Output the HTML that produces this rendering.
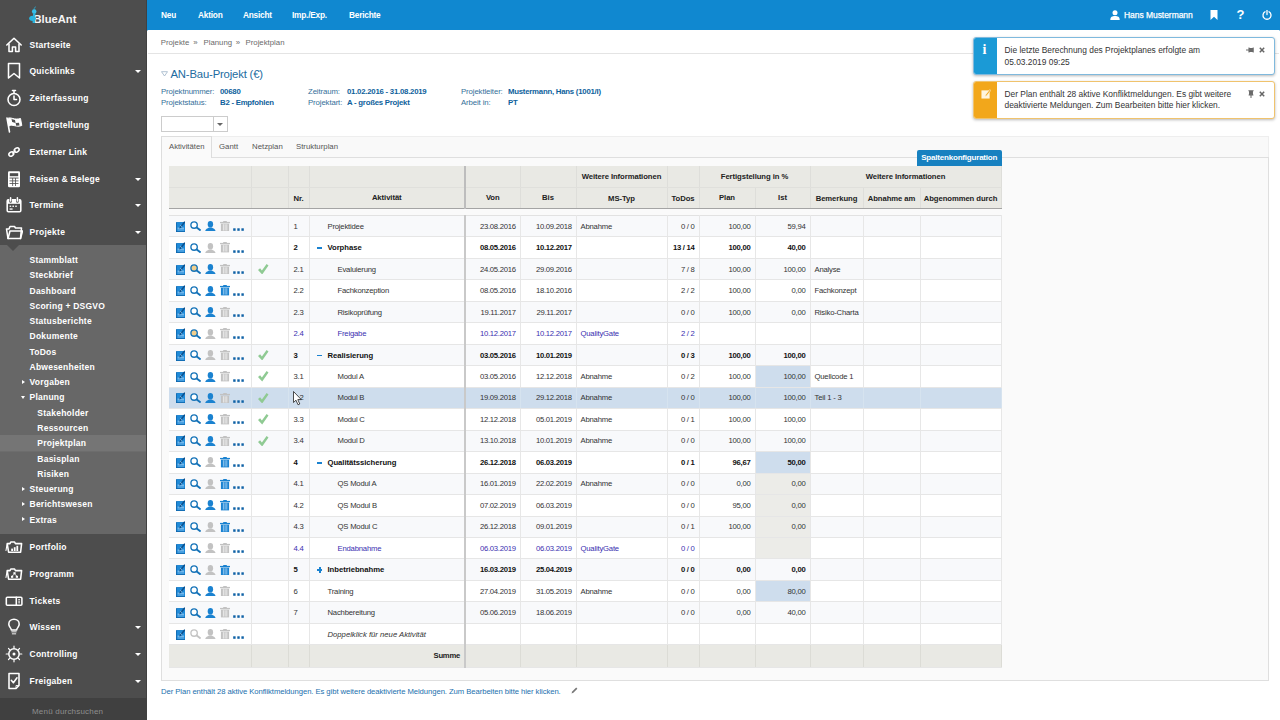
<!DOCTYPE html>
<html lang="de"><head><meta charset="utf-8"><title>Blue Ant - Projektplan</title>
<style>
*{box-sizing:border-box;margin:0;padding:0}
html,body{width:1280px;height:720px;overflow:hidden;background:#fff}
body{font-family:"Liberation Sans","DejaVu Sans",sans-serif;font-size:8px;color:#333;position:relative}
#sb{position:absolute;left:0;top:0;width:147px;height:720px;background:#4d4d4d;color:#fff;overflow:hidden;box-shadow:inset -1px 0 0 #414141}
#logo{position:absolute;left:33.5px;top:9px;font-size:11.2px;font-weight:bold;color:#f4f4f4;letter-spacing:0;line-height:20px;white-space:nowrap}
.mi{position:absolute;left:0;width:148px;height:26px;line-height:26px}
.sbi{position:absolute;left:5px;top:4px}
.mt{position:absolute;left:29.5px;top:0;font-size:8.5px;font-weight:bold;letter-spacing:.26px;color:#fff;white-space:nowrap}
.car{position:absolute;left:135px;top:12px;border:3px solid transparent;border-top:3.5px solid #fff;border-bottom:0}
.subbg{position:absolute;left:0;top:245px;width:146px;height:289px;background:#676767}
.notch{position:absolute;left:6.7px;top:245px;border:6px solid transparent;border-top:6px solid #4d4d4d;border-bottom:0}
.si{position:absolute;left:0;width:148px;height:15px;line-height:15px;font-size:8.5px;font-weight:bold;letter-spacing:.24px;color:#fff;white-space:nowrap}
.si.act{background:#757575;box-shadow:0 -1px 0 #757575,0 .5px 0 #757575;width:146px}
.tr{position:absolute;left:21.8px;top:4.8px;border:2.7px solid transparent;border-left:3.3px solid #fff;border-right:0}
.td2{position:absolute;left:20.6px;top:6px;border:2.8px solid transparent;border-top:3.4px solid #fff;border-bottom:0}
#srch{position:absolute;left:0;top:698px;width:148px;height:22px;background:#404040;color:#8e8e8e;font-size:8px;line-height:27px;padding-left:32px;letter-spacing:.2px}
#tb{position:absolute;left:147px;top:0;width:1133px;height:30px;background:#1088d0;color:#fff;box-shadow:0 1px 0 #9fcfec}
#tb>*{margin-left:1px}
#tb span{position:absolute;top:0;line-height:30px;font-size:8.3px;font-weight:bold;white-space:nowrap;letter-spacing:-.22px}
#bc{position:absolute;left:149px;top:30px;width:1131px;height:24px;border-bottom:1px solid #e4e4e4;margin-left:-1px;padding-left:0;background:#fff;color:#6a6a6a;font-size:7.8px;line-height:26px}
#bc span{position:absolute;top:0;white-space:nowrap}
#ttl{position:absolute;left:170.5px;top:65px;font-size:11.3px;letter-spacing:-.17px;line-height:18px;color:#226c9f;white-space:nowrap}
.inf{position:absolute;font-size:7.8px;line-height:10px;color:#356f99;white-space:nowrap;margin-top:.5px;letter-spacing:-.12px}
.inf b{letter-spacing:-.24px}
.inf b{color:#0e5f9c}
#dd{position:absolute;left:161px;top:116px;width:67px;height:16px;border:1px solid #ccc;background:#fff}
#dd i{position:absolute;left:51px;top:0;width:1px;height:14px;background:#ccc}
#dd b{position:absolute;left:54.5px;top:6px;border:3px solid transparent;border-top:3px solid #666;border-bottom:0}
#tabs{position:absolute;left:161px;top:136px;width:1108px;height:22px;background:#f9f9f9;border-top:1px solid #eee;border-right:1px solid #eee}
#tabs span{position:absolute;top:0;line-height:20px;font-size:7.8px;color:#555;white-space:nowrap}
#tab1{position:absolute;left:161px;top:136px;width:51px;height:22px;background:#fafafa;border:1px solid #ddd;border-bottom:0}
#panel{position:absolute;left:161px;top:157px;width:1108px;height:524px;background:#fafafa;border:1px solid #dfdfdf}
#tab1{z-index:2;font-size:7.7px;color:#555;line-height:20px;padding-left:7px}
#spk{position:absolute;left:917px;top:150px;width:84.5px;height:15.5px;background:#1781c0;color:#fff;font-weight:bold;font-size:8px;letter-spacing:-.2px;line-height:15px;text-align:center;border-radius:2px 2px 0 0;white-space:nowrap;z-index:3}
table{position:absolute;left:169px;top:166px;border-collapse:collapse;table-layout:fixed;width:832px;z-index:3}
th{background:#e9e9e4;font-size:7.7px;letter-spacing:-.07px;font-weight:bold;color:#222;height:21.4px;border-right:1px solid #dededa;border-bottom:1px solid #e0e0dc;text-align:center;white-space:nowrap;overflow:hidden;padding:0}
tr.h2 th{border-bottom:1px solid #a4a4a4;height:21.6px;padding-bottom:.6px}
tr.h2 th.lo{padding-bottom:0;padding-top:1.5px}
tr.gap td{height:6.5px;border:0;background:#fafafa}
td{height:21.47px;font-size:7.7px;letter-spacing:-.2px;color:#333;border-right:1px solid #e7e7e7;border-bottom:1px solid #e6e6e6;white-space:nowrap;overflow:hidden;padding:0 4px;background:#fff;vertical-align:middle}
tbody tr:nth-child(2) td{border-top:1px solid #e2e2e2}
tr.alt td{background:#f8f9fb}
tr.b td{font-weight:bold;color:#111}
tr.l td{color:#3a2fb0}
tr.sel td{background:#cedded;border-right-color:#d6e3ef}
tr.sum td{height:22.2px;background:#e9e9e4;border-right:1px solid #dcdcd6}
td.r{text-align:right;letter-spacing:-.27px}
tr.b td.name{letter-spacing:-.04px}
tr.new td.name{letter-spacing:0}
td.d{padding-right:3.8px}
td.td{padding-right:4px}
td.act{padding:0 0 0 6.7px}
td.c{text-align:left;padding:0 0 0 6.5px}
td.c svg{vertical-align:middle}
td.nr{padding-left:5px}
td.ib{background:#cedded !important}
td.ig{background:#ecece8 !important}
td.sm{font-weight:bold;color:#222}
.thick{border-left:2px solid #c9c9c9}
th.thick{border-left:2px solid #bdbdbd}
.ic{vertical-align:middle}
.tg{display:inline-block;width:10px;margin-left:-10px;height:6px;position:relative;vertical-align:middle}
.tg i{position:absolute;left:-.5px;top:2.2px;width:5.4px;height:1.5px;background:#1a82d0}
.tg b{position:absolute;left:1.5px;top:.2px;width:1.5px;height:5.4px;background:#1a82d0}
#foot{position:absolute;left:161px;top:687px;font-size:7.7px;letter-spacing:-.07px;color:#1a70ae;white-space:nowrap;line-height:10px}
.nt{position:absolute;left:973px;width:302px;height:37.5px;background:#fff;border-radius:3px;box-shadow:0 1px 3px rgba(0,0,0,.28);overflow:hidden;z-index:5}
.nt .bar{position:absolute;left:0;top:0;width:23px;height:38px}
.nt p{position:absolute;left:30.5px;top:7px;font-size:8.4px;line-height:11.4px;color:#333;white-space:nowrap}
.nt .x{position:absolute;top:8.5px;font-size:7px;color:#666;font-weight:bold;line-height:8px}
</style></head><body>
<div id="sb">
<div id="logo"><svg width="9" height="18" viewBox="0 0 9 18" style="position:absolute;left:-4.5px;top:-3px"><path d="M5 4 C5 2 6 1 7 .6" stroke="#2bb5e0" stroke-width=".7" fill="none"/><circle cx="5.2" cy="5.6" r="2.3" fill="#37c0ea"/><rect x="4" y="7.5" width="2.4" height="3" fill="#2bb5e0"/><ellipse cx="3.6" cy="12.3" rx="3.4" ry="2.6" fill="#2bb5e0"/><rect x="3.6" y="14" width="2.6" height="3" fill="#2bb5e0"/></svg>BlueAnt</div>
<div class="mi" style="top:31.6px"><svg class="sbi" width="18" height="18" viewBox="0 0 18 18"><path d="M1.8 9 L9 2.2 L16.2 9" stroke="#fff" fill="none" stroke-width="1.55" stroke-linejoin="round" stroke-linecap="round"/><path d="M4 8 V15.5 H7.4 V11 H10.6 V15.5 H14 V8" stroke="#fff" fill="none" stroke-width="1.55" stroke-linejoin="round" stroke-linecap="round"/></svg><span class="mt">Startseite</span></div><div class="mi" style="top:58.4px"><svg class="sbi" width="18" height="18" viewBox="0 0 18 18"><path d="M3.5 1.5 H14.5 V16 L9 11.5 L3.5 16 Z" stroke="#fff" fill="none" stroke-width="1.55" stroke-linejoin="round" stroke-linecap="round"/></svg><span class="mt">Quicklinks</span><span class="car"></span></div><div class="mi" style="top:85.2px"><svg class="sbi" width="18" height="18" viewBox="0 0 18 18"><circle cx="9" cy="10.5" r="6" stroke="#fff" fill="none" stroke-width="1.55" stroke-linejoin="round" stroke-linecap="round"/><path d="M9 7 V10.5 H11.5" stroke="#fff" fill="none" stroke-width="1.55" stroke-linejoin="round" stroke-linecap="round"/><path d="M7.5 1.5 H10.5 M9 1.5 V4" stroke="#fff" fill="none" stroke-width="1.55" stroke-linejoin="round" stroke-linecap="round"/></svg><span class="mt">Zeiterfassung</span></div><div class="mi" style="top:112.0px"><svg class="sbi" width="18" height="18" viewBox="0 0 18 18"><path d="M2 2 L4.5 16" stroke="#fff" fill="none" stroke-width="1.55" stroke-linejoin="round" stroke-linecap="round"/><path d="M2.5 2.5 C6 0.5 9 4.5 15.5 2.5 L16.8 9.5 C11 11.8 7.5 7.5 4 10 Z" fill="#fff" stroke="#fff" stroke-width="1"/><path d="M6.5 3 L10 4 L10.6 7 L7.2 6 Z M10.6 7 L14 6.8 L14.5 9.6 L11.2 9.8 Z" fill="#4d4d4d"/></svg><span class="mt">Fertigstellung</span></div><div class="mi" style="top:138.8px"><svg class="sbi" width="18" height="18" viewBox="0 0 18 18"><ellipse cx="6.3" cy="11" rx="2.6" ry="1.9" transform="rotate(-35 6.3 11)" stroke="#fff" fill="none" stroke-width="1.55" stroke-linejoin="round" stroke-linecap="round"/><ellipse cx="11.7" cy="7" rx="2.6" ry="1.9" transform="rotate(-35 11.7 7)" stroke="#fff" fill="none" stroke-width="1.55" stroke-linejoin="round" stroke-linecap="round"/><path d="M7.8 10 L10.2 8" stroke="#fff" fill="none" stroke-width="1.55" stroke-linejoin="round" stroke-linecap="round"/></svg><span class="mt">Externer Link</span></div><div class="mi" style="top:165.6px"><svg class="sbi" width="18" height="18" viewBox="0 0 18 18"><rect x="3" y="1.2" width="12" height="16" rx="1.2" fill="#fff"/><rect x="4.8" y="3.2" width="8.4" height="3" fill="#4d4d4d"/><g fill="#4d4d4d"><rect x="4.5" y="7.6" width="9" height=".9"/><rect x="4.5" y="10.5" width="9" height=".8"/><rect x="4.5" y="13.2" width="9" height=".8"/><rect x="7.3" y="8" width=".8" height="8"/><rect x="10" y="8" width=".8" height="8"/></g></svg><span class="mt">Reisen &amp; Belege</span><span class="car"></span></div><div class="mi" style="top:192.4px"><svg class="sbi" width="18" height="18" viewBox="0 0 18 18"><rect x="2.2" y="3.8" width="13.6" height="12" rx="1.2" stroke="#fff" fill="none" stroke-width="1.55" stroke-linejoin="round" stroke-linecap="round"/><rect x="2.2" y="3.8" width="13.6" height="4" fill="#fff"/><path d="M5.6 1.8 V5.4 M12.4 1.8 V5.4" stroke="#4d4d4d" stroke-width="2.6" stroke-linecap="round"/><path d="M5.6 1.8 V5 M12.4 1.8 V5" stroke="#fff" fill="none" stroke-width="1.55" stroke-linejoin="round" stroke-linecap="round"/><g fill="#fff"><rect x="4.6" y="9.6" width="1.6" height="1.3"/><rect x="7.4" y="9.6" width="1.6" height="1.3"/><rect x="10.2" y="9.6" width="1.6" height="1.3"/><rect x="4.6" y="12.4" width="3" height="1.3"/></g></svg><span class="mt">Termine</span><span class="car"></span></div><div class="mi" style="top:219.2px"><svg class="sbi" width="18" height="18" viewBox="0 0 18 18"><path d="M3 15.5 L1.5 6 H4 L5 3.5 H9.5 L10.5 5 H16.5 L15.5 15.5 Z" stroke="#fff" fill="none" stroke-width="1.55" stroke-linejoin="round" stroke-linecap="round"/><path d="M3 15.5 L5 8 H17.5 L15.5 15.5" stroke="#fff" fill="none" stroke-width="1.55" stroke-linejoin="round" stroke-linecap="round"/></svg><span class="mt">Projekte</span><span class="car"></span></div><div class="subbg"></div><div class="notch"></div><div class="si" style="top:253.0px;padding-left:29.5px">Stammblatt</div><div class="si" style="top:268.3px;padding-left:29.5px">Steckbrief</div><div class="si" style="top:283.5px;padding-left:29.5px">Dashboard</div><div class="si" style="top:298.8px;padding-left:29.5px">Scoring + DSGVO</div><div class="si" style="top:314.1px;padding-left:29.5px">Statusberichte</div><div class="si" style="top:329.4px;padding-left:29.5px">Dokumente</div><div class="si" style="top:344.6px;padding-left:29.5px">ToDos</div><div class="si" style="top:359.9px;padding-left:29.5px">Abwesenheiten</div><div class="si" style="top:375.2px;padding-left:29.5px"><span class="tr"></span>Vorgaben</div><div class="si" style="top:390.4px;padding-left:29.5px"><span class="td2"></span>Planung</div><div class="si" style="top:405.7px;padding-left:37.3px">Stakeholder</div><div class="si" style="top:421.0px;padding-left:37.3px">Ressourcen</div><div class="si act" style="top:436.2px;padding-left:37.3px">Projektplan</div><div class="si" style="top:451.5px;padding-left:37.3px">Basisplan</div><div class="si" style="top:466.8px;padding-left:37.3px">Risiken</div><div class="si" style="top:482.0px;padding-left:29.5px"><span class="tr"></span>Steuerung</div><div class="si" style="top:497.3px;padding-left:29.5px"><span class="tr"></span>Berichtswesen</div><div class="si" style="top:512.6px;padding-left:29.5px"><span class="tr"></span>Extras</div><div class="mi" style="top:534.0px"><svg class="sbi" width="18" height="18" viewBox="0 0 18 18"><path d="M3.6 14.2 L2.2 5.6 H5 L5.8 4 H9.6 L10.4 5.6 H16.6 L15.6 14.2 Z" stroke="#fff" fill="none" stroke-width="1.55" stroke-linejoin="round" stroke-linecap="round"/><path d="M2 6.5 L1 12.5" stroke="#fff" stroke-width="1.1" stroke-linecap="round"/><g fill="#fff"><rect x="6.2" y="10.6" width="1.8" height="2.4"/><rect x="8.8" y="9.2" width="1.8" height="3.8"/><rect x="11.4" y="7.8" width="1.8" height="5.2"/></g></svg><span class="mt">Portfolio</span></div><div class="mi" style="top:561.0px"><svg class="sbi" width="18" height="18" viewBox="0 0 18 18"><path d="M3.6 14.2 L2.2 5.6 H5 L5.8 4 H9.6 L10.4 5.6 H16.6 L15.6 14.2 Z" stroke="#fff" fill="none" stroke-width="1.55" stroke-linejoin="round" stroke-linecap="round"/><path d="M2 6.5 L1 12.5" stroke="#fff" stroke-width="1.1" stroke-linecap="round"/><g fill="#fff"><rect x="8.4" y="7.2" width="2.2" height="2"/><rect x="6" y="10.8" width="2.2" height="2"/><rect x="10.8" y="10.8" width="2.2" height="2"/></g><path d="M9.5 9 L7.1 11 M9.5 9 L11.9 11" stroke="#fff" stroke-width=".8"/></svg><span class="mt">Programm</span></div><div class="mi" style="top:587.8px"><svg class="sbi" width="18" height="18" viewBox="0 0 18 18"><rect x="1.3" y="5.2" width="15.6" height="8" rx="1" stroke="#fff" fill="none" stroke-width="1.55" stroke-linejoin="round" stroke-linecap="round"/><path d="M11.3 5.2 V13.2" stroke="#fff" fill="none" stroke-width="1.55" stroke-linejoin="round" stroke-linecap="round"/><path d="M13.2 7.6 H15 M13.2 9.2 H15 M13.2 10.8 H15" stroke="#fff" stroke-width=".9"/></svg><span class="mt">Tickets</span></div><div class="mi" style="top:614.0px"><svg class="sbi" width="18" height="18" viewBox="0 0 18 18"><path d="M6.3 12 C6.3 10 3.8 9 3.8 6.2 C3.8 3.3 6.1 1.3 9 1.3 C11.9 1.3 14.2 3.3 14.2 6.2 C14.2 9 11.7 10 11.7 12 Z" stroke="#fff" fill="none" stroke-width="1.55" stroke-linejoin="round" stroke-linecap="round"/><rect x="6.4" y="13" width="5.2" height="1.5" fill="#bbb"/><rect x="6.9" y="15" width="4.2" height="1.5" fill="#bbb"/></svg><span class="mt">Wissen</span><span class="car"></span></div><div class="mi" style="top:641.0px"><svg class="sbi" width="18" height="18" viewBox="0 0 18 18"><circle cx="9" cy="9" r="5.2" stroke="#fff" fill="none" stroke-width="1.55" stroke-linejoin="round" stroke-linecap="round"/><circle cx="9" cy="9" r="1.5" fill="#fff"/><path d="M9 1.2 V3 M9 15 V16.8 M1.2 9 H3 M15 9 H16.8 M3.5 3.5 L4.8 4.8 M13.2 13.2 L14.5 14.5 M14.5 3.5 L13.2 4.8 M4.8 13.2 L3.5 14.5" stroke="#fff" stroke-width="1.2" stroke-linecap="round"/></svg><span class="mt">Controlling</span><span class="car"></span></div><div class="mi" style="top:668.0px"><svg class="sbi" width="18" height="18" viewBox="0 0 18 18"><path d="M4 1.5 H14 V13.5 L11 16.5 H4 Z" stroke="#fff" fill="none" stroke-width="1.55" stroke-linejoin="round" stroke-linecap="round"/><path d="M6.3 8.3 L8.4 10.8 L12 5.8" stroke="#fff" fill="none" stroke-width="1.55" stroke-linejoin="round" stroke-linecap="round"/><path d="M14 13.5 H11 V16.5" stroke="#fff" stroke-width=".9" fill="none"/></svg><span class="mt">Freigaben</span><span class="car"></span></div>
<div id="srch">Menü durchsuchen</div>
</div>
<div id="tb">
<span style="left:13px">Neu</span><span style="left:50px">Aktion</span><span style="left:95px">Ansicht</span><span style="left:144px">Imp./Exp.</span><span style="left:201px">Berichte</span>
<svg width="10" height="10" viewBox="0 0 10 10" style="position:absolute;left:962px;top:10px"><circle cx="5" cy="2.8" r="2.5" fill="#fff"/><path d="M0.3 10 C0.3 6.8 2.2 6 5 6 C7.8 6 9.7 6.8 9.7 10 Z" fill="#fff"/></svg>
<span style="left:976px;font-weight:normal;font-size:8.5px;letter-spacing:-.05px;-webkit-text-stroke:.25px #fff">Hans Mustermann</span>
<svg width="8" height="10" viewBox="0 0 8 10" style="position:absolute;left:1062px;top:10px"><path d="M0.5 0 H7.5 V10 L4 6.8 L0.5 10 Z" fill="#fff"/></svg>
<span style="left:1088.5px;font-size:13px;font-weight:bold">?</span>
<svg width="10" height="10" viewBox="0 0 10 10" style="position:absolute;left:1114px;top:10px"><path d="M3 1.8 A4 4 0 1 0 7 1.8" fill="none" stroke="#fff" stroke-width="1.3" stroke-linecap="round"/><path d="M5 0.3 V4.6" stroke="#fff" stroke-width="1.3" stroke-linecap="round"/></svg>
</div>
<div id="bc"><span style="left:12.7px">Projekte</span><span style="left:45.3px">»</span><span style="left:55.5px">Planung</span><span style="left:87.7px">»</span><span style="left:97.5px">Projektplan</span></div>
<svg width="7" height="6" viewBox="0 0 7 6" style="position:absolute;left:161px;top:71px"><path d="M0.5 0.7 H6.5 L3.5 5 Z" fill="none" stroke="#9db3c6" stroke-width=".8"/></svg>
<div id="ttl">AN-Bau-Projekt (€)</div>
<div class="inf" style="left:161px;top:86px">Projektnummer:</div><div class="inf" style="left:220px;top:86px"><b>00680</b></div>
<div class="inf" style="left:161px;top:97px">Projektstatus:</div><div class="inf" style="left:220px;top:97px"><b>B2 - Empfohlen</b></div>
<div class="inf" style="left:308px;top:86px">Zeitraum:</div><div class="inf" style="left:347px;top:86px"><b>01.02.2016 - 31.08.2019</b></div>
<div class="inf" style="left:308px;top:97px">Projektart:</div><div class="inf" style="left:347px;top:97px"><b>A - großes Projekt</b></div>
<div class="inf" style="left:461px;top:86px">Projektleiter:</div><div class="inf" style="left:508px;top:86px"><b>Mustermann, Hans (1001/I)</b></div>
<div class="inf" style="left:461px;top:97px">Arbeit in:</div><div class="inf" style="left:508px;top:97px"><b>PT</b></div>
<div id="dd"><i></i><b></b></div>
<div id="tabs"><span style="left:58px">Gantt</span><span style="left:91px">Netzplan</span><span style="left:135px">Strukturplan</span></div>
<div id="tab1">Aktivitäten</div>
<div id="panel"></div>
<div id="spk">Spaltenkonfiguration</div>
<table>
<colgroup><col style="width:82px"><col style="width:37px"><col style="width:21px"><col style="width:156px"><col style="width:55px"><col style="width:56px"><col style="width:91px"><col style="width:32px"><col style="width:56px"><col style="width:55px"><col style="width:53px"><col style="width:57px"><col style="width:81px"></colgroup>
<thead>
<tr class="h1"><th></th><th></th><th></th><th></th><th class="thick"></th><th></th><th>Weitere Informationen</th><th></th><th colspan="2">Fertigstellung in %</th><th colspan="3">Weitere Informationen</th></tr>
<tr class="h2"><th></th><th></th><th class="lo" style="text-align:left;padding-left:5px">Nr.</th><th>Aktivität</th><th class="thick">Von</th><th>Bis</th><th class="lo">MS-Typ</th><th class="lo">ToDos</th><th>Plan</th><th>Ist</th><th class="lo">Bemerkung</th><th class="lo">Abnahme am</th><th class="lo">Abgenommen durch</th></tr>
</thead>
<tbody>
<tr class="gap"><td colspan="13"></td></tr>
<tr class="alt"><td class="act"><svg class="ic" style="margin-right:4.8px" width="9.5" height="11" viewBox="0 0 9.5 11"><rect x="0" y="1.2" width="9" height="9.8" fill="#0f62a6"/><rect x="0.7" y="1.2" width="8.3" height="9.1" fill="#1f8ad8"/><rect x="1.6" y="6.6" width="6.4" height="1.2" fill="#8cc4ee"/><rect x="1.6" y="8.4" width="6.4" height="1.1" fill="#6db3e8"/><path d="M3.6 5.9 L8.3 0.2 L9.5 1.2 L4.9 6.9 L3.3 7.4 Z" fill="#0c4f8c"/><path d="M4.3 4.4 L5.9 5.7" stroke="#cfe6f8" stroke-width=".7"/></svg><svg class="ic" style="margin-right:3.8px" width="11.2" height="10" viewBox="0 0 11.2 10"><circle cx="4.1" cy="4.1" r="3.2" fill="#fff" stroke="#1573b8" stroke-width="1.35"/><path d="M6.7 6.4 L10 9" stroke="#1573b8" stroke-width="1.9" stroke-linecap="round"/></svg><svg class="ic" style="margin-right:4.2px" width="10.8" height="10" viewBox="0 0 10.8 10"><ellipse cx="5.4" cy="3.3" rx="2.7" ry="3.2" fill="#1a82d0"/><path d="M0.2 10 C0.6 8 2.6 7.6 3.9 6.6 H6.9 C8.2 7.6 10.2 8 10.6 10 Z" fill="#1a82d0"/></svg><svg class="ic" style="margin-right:3.5px" width="10" height="10.4" viewBox="0 0 10 10.4"><rect x="0" y="0.9" width="10" height="1.3" fill="#c2c2c2"/><rect x="3.2" y="0" width="3.6" height="1.2" fill="#c2c2c2"/><path d="M0.9 2.6 H9.1 V10.4 H0.9 Z" fill="#c2c2c2"/><rect x="2.9" y="3.2" width="1" height="6.4" fill="#e9e9e9"/><rect x="4.6" y="3.2" width="1" height="6.4" fill="#e9e9e9"/><rect x="6.3" y="3.2" width="1" height="6.4" fill="#e9e9e9"/></svg><svg class="ic" style="margin-right:0" width="11" height="10" viewBox="0 0 11 10"><rect x="0.2" y="7.3" width="2.4" height="2.5" fill="#0f62a6"/><rect x="4.3" y="7.3" width="2.4" height="2.5" fill="#0f62a6"/><rect x="8.4" y="7.3" width="2.4" height="2.5" fill="#0f62a6"/></svg></td><td class="c"></td><td class="nr">1</td><td class="name" style="padding-left:18px">Projektidee</td><td class="r d thick">23.08.2016</td><td class="r d">10.09.2018</td><td class="ms">Abnahme</td><td class="r td">0 / 0</td><td class="r">100,00</td><td class="r">59,94</td><td class="bem"></td><td></td><td></td></tr>
<tr class="b"><td class="act"><svg class="ic" style="margin-right:4.8px" width="9.5" height="11" viewBox="0 0 9.5 11"><rect x="0" y="1.2" width="9" height="9.8" fill="#0f62a6"/><rect x="0.7" y="1.2" width="8.3" height="9.1" fill="#1f8ad8"/><rect x="1.6" y="6.6" width="6.4" height="1.2" fill="#8cc4ee"/><rect x="1.6" y="8.4" width="6.4" height="1.1" fill="#6db3e8"/><path d="M3.6 5.9 L8.3 0.2 L9.5 1.2 L4.9 6.9 L3.3 7.4 Z" fill="#0c4f8c"/><path d="M4.3 4.4 L5.9 5.7" stroke="#cfe6f8" stroke-width=".7"/></svg><svg class="ic" style="margin-right:3.8px" width="11.2" height="10" viewBox="0 0 11.2 10"><circle cx="4.1" cy="4.1" r="3.2" fill="#fff" stroke="#1573b8" stroke-width="1.35"/><path d="M6.7 6.4 L10 9" stroke="#1573b8" stroke-width="1.9" stroke-linecap="round"/></svg><svg class="ic" style="margin-right:4.2px" width="10.8" height="10" viewBox="0 0 10.8 10"><ellipse cx="5.4" cy="3.3" rx="2.7" ry="3.2" fill="#c2c2c2"/><path d="M0.2 10 C0.6 8 2.6 7.6 3.9 6.6 H6.9 C8.2 7.6 10.2 8 10.6 10 Z" fill="#c2c2c2"/></svg><svg class="ic" style="margin-right:3.5px" width="10" height="10.4" viewBox="0 0 10 10.4"><rect x="0" y="0.9" width="10" height="1.3" fill="#c2c2c2"/><rect x="3.2" y="0" width="3.6" height="1.2" fill="#c2c2c2"/><path d="M0.9 2.6 H9.1 V10.4 H0.9 Z" fill="#c2c2c2"/><rect x="2.9" y="3.2" width="1" height="6.4" fill="#e9e9e9"/><rect x="4.6" y="3.2" width="1" height="6.4" fill="#e9e9e9"/><rect x="6.3" y="3.2" width="1" height="6.4" fill="#e9e9e9"/></svg><svg class="ic" style="margin-right:0" width="11" height="10" viewBox="0 0 11 10"><rect x="0.2" y="7.3" width="2.4" height="2.5" fill="#0f62a6"/><rect x="4.3" y="7.3" width="2.4" height="2.5" fill="#0f62a6"/><rect x="8.4" y="7.3" width="2.4" height="2.5" fill="#0f62a6"/></svg></td><td class="c"></td><td class="nr">2</td><td class="name" style="padding-left:18px"><span class="tg"><i></i></span>Vorphase</td><td class="r d thick">08.05.2016</td><td class="r d">10.12.2017</td><td class="ms"></td><td class="r td">13 / 14</td><td class="r">100,00</td><td class="r">40,00</td><td class="bem"></td><td></td><td></td></tr>
<tr class="alt"><td class="act"><svg class="ic" style="margin-right:4.8px" width="9.5" height="11" viewBox="0 0 9.5 11"><rect x="0" y="1.2" width="9" height="9.8" fill="#0f62a6"/><rect x="0.7" y="1.2" width="8.3" height="9.1" fill="#1f8ad8"/><rect x="1.6" y="6.6" width="6.4" height="1.2" fill="#8cc4ee"/><rect x="1.6" y="8.4" width="6.4" height="1.1" fill="#6db3e8"/><path d="M3.6 5.9 L8.3 0.2 L9.5 1.2 L4.9 6.9 L3.3 7.4 Z" fill="#0c4f8c"/><path d="M4.3 4.4 L5.9 5.7" stroke="#cfe6f8" stroke-width=".7"/></svg><svg class="ic" style="margin-right:3.8px" width="11.2" height="10" viewBox="0 0 11.2 10"><circle cx="4.1" cy="4.1" r="3.2" fill="#f1cf8e" stroke="#1573b8" stroke-width="1.35"/><path d="M6.7 6.4 L10 9" stroke="#1573b8" stroke-width="1.9" stroke-linecap="round"/></svg><svg class="ic" style="margin-right:4.2px" width="10.8" height="10" viewBox="0 0 10.8 10"><ellipse cx="5.4" cy="3.3" rx="2.7" ry="3.2" fill="#1a82d0"/><path d="M0.2 10 C0.6 8 2.6 7.6 3.9 6.6 H6.9 C8.2 7.6 10.2 8 10.6 10 Z" fill="#1a82d0"/></svg><svg class="ic" style="margin-right:3.5px" width="10" height="10.4" viewBox="0 0 10 10.4"><rect x="0" y="0.9" width="10" height="1.3" fill="#c2c2c2"/><rect x="3.2" y="0" width="3.6" height="1.2" fill="#c2c2c2"/><path d="M0.9 2.6 H9.1 V10.4 H0.9 Z" fill="#c2c2c2"/><rect x="2.9" y="3.2" width="1" height="6.4" fill="#e9e9e9"/><rect x="4.6" y="3.2" width="1" height="6.4" fill="#e9e9e9"/><rect x="6.3" y="3.2" width="1" height="6.4" fill="#e9e9e9"/></svg><svg class="ic" style="margin-right:0" width="11" height="10" viewBox="0 0 11 10"><rect x="0.2" y="7.3" width="2.4" height="2.5" fill="#0f62a6"/><rect x="4.3" y="7.3" width="2.4" height="2.5" fill="#0f62a6"/><rect x="8.4" y="7.3" width="2.4" height="2.5" fill="#0f62a6"/></svg></td><td class="c"><svg width="10.5" height="10.5" viewBox="0 0 10.5 10.5"><path d="M0 5.9 L2.1 4.2 L3.9 6.4 L8.6 0 L10.5 1.4 L4.2 10.5 Z" fill="#8fca93"/></svg></td><td class="nr">2.1</td><td class="name" style="padding-left:28px">Evaluierung</td><td class="r d thick">24.05.2016</td><td class="r d">29.09.2016</td><td class="ms"></td><td class="r td">7 / 8</td><td class="r">100,00</td><td class="r">100,00</td><td class="bem">Analyse</td><td></td><td></td></tr>
<tr class=""><td class="act"><svg class="ic" style="margin-right:4.8px" width="9.5" height="11" viewBox="0 0 9.5 11"><rect x="0" y="1.2" width="9" height="9.8" fill="#0f62a6"/><rect x="0.7" y="1.2" width="8.3" height="9.1" fill="#1f8ad8"/><rect x="1.6" y="6.6" width="6.4" height="1.2" fill="#8cc4ee"/><rect x="1.6" y="8.4" width="6.4" height="1.1" fill="#6db3e8"/><path d="M3.6 5.9 L8.3 0.2 L9.5 1.2 L4.9 6.9 L3.3 7.4 Z" fill="#0c4f8c"/><path d="M4.3 4.4 L5.9 5.7" stroke="#cfe6f8" stroke-width=".7"/></svg><svg class="ic" style="margin-right:3.8px" width="11.2" height="10" viewBox="0 0 11.2 10"><circle cx="4.1" cy="4.1" r="3.2" fill="#fff" stroke="#1573b8" stroke-width="1.35"/><path d="M6.7 6.4 L10 9" stroke="#1573b8" stroke-width="1.9" stroke-linecap="round"/></svg><svg class="ic" style="margin-right:4.2px" width="10.8" height="10" viewBox="0 0 10.8 10"><ellipse cx="5.4" cy="3.3" rx="2.7" ry="3.2" fill="#1a82d0"/><path d="M0.2 10 C0.6 8 2.6 7.6 3.9 6.6 H6.9 C8.2 7.6 10.2 8 10.6 10 Z" fill="#1a82d0"/></svg><svg class="ic" style="margin-right:3.5px" width="10" height="10.4" viewBox="0 0 10 10.4"><rect x="0" y="0.9" width="10" height="1.3" fill="#1a82d0"/><rect x="3.2" y="0" width="3.6" height="1.2" fill="#1a82d0"/><path d="M0.9 2.6 H9.1 V10.4 H0.9 Z" fill="#1a82d0"/><rect x="2.9" y="3.2" width="1" height="6.4" fill="#8cc4ee"/><rect x="4.6" y="3.2" width="1" height="6.4" fill="#8cc4ee"/><rect x="6.3" y="3.2" width="1" height="6.4" fill="#8cc4ee"/></svg><svg class="ic" style="margin-right:0" width="11" height="10" viewBox="0 0 11 10"><rect x="0.2" y="7.3" width="2.4" height="2.5" fill="#0f62a6"/><rect x="4.3" y="7.3" width="2.4" height="2.5" fill="#0f62a6"/><rect x="8.4" y="7.3" width="2.4" height="2.5" fill="#0f62a6"/></svg></td><td class="c"></td><td class="nr">2.2</td><td class="name" style="padding-left:28px">Fachkonzeption</td><td class="r d thick">08.05.2016</td><td class="r d">18.10.2016</td><td class="ms"></td><td class="r td">2 / 2</td><td class="r">100,00</td><td class="r">0,00</td><td class="bem">Fachkonzept</td><td></td><td></td></tr>
<tr class="alt"><td class="act"><svg class="ic" style="margin-right:4.8px" width="9.5" height="11" viewBox="0 0 9.5 11"><rect x="0" y="1.2" width="9" height="9.8" fill="#0f62a6"/><rect x="0.7" y="1.2" width="8.3" height="9.1" fill="#1f8ad8"/><rect x="1.6" y="6.6" width="6.4" height="1.2" fill="#8cc4ee"/><rect x="1.6" y="8.4" width="6.4" height="1.1" fill="#6db3e8"/><path d="M3.6 5.9 L8.3 0.2 L9.5 1.2 L4.9 6.9 L3.3 7.4 Z" fill="#0c4f8c"/><path d="M4.3 4.4 L5.9 5.7" stroke="#cfe6f8" stroke-width=".7"/></svg><svg class="ic" style="margin-right:3.8px" width="11.2" height="10" viewBox="0 0 11.2 10"><circle cx="4.1" cy="4.1" r="3.2" fill="#fff" stroke="#1573b8" stroke-width="1.35"/><path d="M6.7 6.4 L10 9" stroke="#1573b8" stroke-width="1.9" stroke-linecap="round"/></svg><svg class="ic" style="margin-right:4.2px" width="10.8" height="10" viewBox="0 0 10.8 10"><ellipse cx="5.4" cy="3.3" rx="2.7" ry="3.2" fill="#1a82d0"/><path d="M0.2 10 C0.6 8 2.6 7.6 3.9 6.6 H6.9 C8.2 7.6 10.2 8 10.6 10 Z" fill="#1a82d0"/></svg><svg class="ic" style="margin-right:3.5px" width="10" height="10.4" viewBox="0 0 10 10.4"><rect x="0" y="0.9" width="10" height="1.3" fill="#c2c2c2"/><rect x="3.2" y="0" width="3.6" height="1.2" fill="#c2c2c2"/><path d="M0.9 2.6 H9.1 V10.4 H0.9 Z" fill="#c2c2c2"/><rect x="2.9" y="3.2" width="1" height="6.4" fill="#e9e9e9"/><rect x="4.6" y="3.2" width="1" height="6.4" fill="#e9e9e9"/><rect x="6.3" y="3.2" width="1" height="6.4" fill="#e9e9e9"/></svg><svg class="ic" style="margin-right:0" width="11" height="10" viewBox="0 0 11 10"><rect x="0.2" y="7.3" width="2.4" height="2.5" fill="#0f62a6"/><rect x="4.3" y="7.3" width="2.4" height="2.5" fill="#0f62a6"/><rect x="8.4" y="7.3" width="2.4" height="2.5" fill="#0f62a6"/></svg></td><td class="c"></td><td class="nr">2.3</td><td class="name" style="padding-left:28px">Risikoprüfung</td><td class="r d thick">19.11.2017</td><td class="r d">29.11.2017</td><td class="ms"></td><td class="r td">0 / 0</td><td class="r">100,00</td><td class="r">0,00</td><td class="bem">Risiko-Charta</td><td></td><td></td></tr>
<tr class="l"><td class="act"><svg class="ic" style="margin-right:4.8px" width="9.5" height="11" viewBox="0 0 9.5 11"><rect x="0" y="1.2" width="9" height="9.8" fill="#0f62a6"/><rect x="0.7" y="1.2" width="8.3" height="9.1" fill="#1f8ad8"/><rect x="1.6" y="6.6" width="6.4" height="1.2" fill="#8cc4ee"/><rect x="1.6" y="8.4" width="6.4" height="1.1" fill="#6db3e8"/><path d="M3.6 5.9 L8.3 0.2 L9.5 1.2 L4.9 6.9 L3.3 7.4 Z" fill="#0c4f8c"/><path d="M4.3 4.4 L5.9 5.7" stroke="#cfe6f8" stroke-width=".7"/></svg><svg class="ic" style="margin-right:3.8px" width="11.2" height="10" viewBox="0 0 11.2 10"><circle cx="4.1" cy="4.1" r="3.2" fill="#f1cf8e" stroke="#1573b8" stroke-width="1.35"/><path d="M6.7 6.4 L10 9" stroke="#1573b8" stroke-width="1.9" stroke-linecap="round"/></svg><svg class="ic" style="margin-right:4.2px" width="10.8" height="10" viewBox="0 0 10.8 10"><ellipse cx="5.4" cy="3.3" rx="2.7" ry="3.2" fill="#c2c2c2"/><path d="M0.2 10 C0.6 8 2.6 7.6 3.9 6.6 H6.9 C8.2 7.6 10.2 8 10.6 10 Z" fill="#c2c2c2"/></svg><svg class="ic" style="margin-right:3.5px" width="10" height="10.4" viewBox="0 0 10 10.4"><rect x="0" y="0.9" width="10" height="1.3" fill="#c2c2c2"/><rect x="3.2" y="0" width="3.6" height="1.2" fill="#c2c2c2"/><path d="M0.9 2.6 H9.1 V10.4 H0.9 Z" fill="#c2c2c2"/><rect x="2.9" y="3.2" width="1" height="6.4" fill="#e9e9e9"/><rect x="4.6" y="3.2" width="1" height="6.4" fill="#e9e9e9"/><rect x="6.3" y="3.2" width="1" height="6.4" fill="#e9e9e9"/></svg><svg class="ic" style="margin-right:0" width="11" height="10" viewBox="0 0 11 10"><rect x="0.2" y="7.3" width="2.4" height="2.5" fill="#0f62a6"/><rect x="4.3" y="7.3" width="2.4" height="2.5" fill="#0f62a6"/><rect x="8.4" y="7.3" width="2.4" height="2.5" fill="#0f62a6"/></svg></td><td class="c"></td><td class="nr">2.4</td><td class="name" style="padding-left:28px">Freigabe</td><td class="r d thick">10.12.2017</td><td class="r d">10.12.2017</td><td class="ms">QualityGate</td><td class="r td">2 / 2</td><td class="r"></td><td class="r"></td><td class="bem"></td><td></td><td></td></tr>
<tr class="alt b"><td class="act"><svg class="ic" style="margin-right:4.8px" width="9.5" height="11" viewBox="0 0 9.5 11"><rect x="0" y="1.2" width="9" height="9.8" fill="#0f62a6"/><rect x="0.7" y="1.2" width="8.3" height="9.1" fill="#1f8ad8"/><rect x="1.6" y="6.6" width="6.4" height="1.2" fill="#8cc4ee"/><rect x="1.6" y="8.4" width="6.4" height="1.1" fill="#6db3e8"/><path d="M3.6 5.9 L8.3 0.2 L9.5 1.2 L4.9 6.9 L3.3 7.4 Z" fill="#0c4f8c"/><path d="M4.3 4.4 L5.9 5.7" stroke="#cfe6f8" stroke-width=".7"/></svg><svg class="ic" style="margin-right:3.8px" width="11.2" height="10" viewBox="0 0 11.2 10"><circle cx="4.1" cy="4.1" r="3.2" fill="#fff" stroke="#1573b8" stroke-width="1.35"/><path d="M6.7 6.4 L10 9" stroke="#1573b8" stroke-width="1.9" stroke-linecap="round"/></svg><svg class="ic" style="margin-right:4.2px" width="10.8" height="10" viewBox="0 0 10.8 10"><ellipse cx="5.4" cy="3.3" rx="2.7" ry="3.2" fill="#c2c2c2"/><path d="M0.2 10 C0.6 8 2.6 7.6 3.9 6.6 H6.9 C8.2 7.6 10.2 8 10.6 10 Z" fill="#c2c2c2"/></svg><svg class="ic" style="margin-right:3.5px" width="10" height="10.4" viewBox="0 0 10 10.4"><rect x="0" y="0.9" width="10" height="1.3" fill="#c2c2c2"/><rect x="3.2" y="0" width="3.6" height="1.2" fill="#c2c2c2"/><path d="M0.9 2.6 H9.1 V10.4 H0.9 Z" fill="#c2c2c2"/><rect x="2.9" y="3.2" width="1" height="6.4" fill="#e9e9e9"/><rect x="4.6" y="3.2" width="1" height="6.4" fill="#e9e9e9"/><rect x="6.3" y="3.2" width="1" height="6.4" fill="#e9e9e9"/></svg><svg class="ic" style="margin-right:0" width="11" height="10" viewBox="0 0 11 10"><rect x="0.2" y="7.3" width="2.4" height="2.5" fill="#0f62a6"/><rect x="4.3" y="7.3" width="2.4" height="2.5" fill="#0f62a6"/><rect x="8.4" y="7.3" width="2.4" height="2.5" fill="#0f62a6"/></svg></td><td class="c"><svg width="10.5" height="10.5" viewBox="0 0 10.5 10.5"><path d="M0 5.9 L2.1 4.2 L3.9 6.4 L8.6 0 L10.5 1.4 L4.2 10.5 Z" fill="#8fca93"/></svg></td><td class="nr">3</td><td class="name" style="padding-left:18px"><span class="tg"><i></i></span>Realisierung</td><td class="r d thick">03.05.2016</td><td class="r d">10.01.2019</td><td class="ms"></td><td class="r td">0 / 3</td><td class="r">100,00</td><td class="r">100,00</td><td class="bem"></td><td></td><td></td></tr>
<tr class=""><td class="act"><svg class="ic" style="margin-right:4.8px" width="9.5" height="11" viewBox="0 0 9.5 11"><rect x="0" y="1.2" width="9" height="9.8" fill="#0f62a6"/><rect x="0.7" y="1.2" width="8.3" height="9.1" fill="#1f8ad8"/><rect x="1.6" y="6.6" width="6.4" height="1.2" fill="#8cc4ee"/><rect x="1.6" y="8.4" width="6.4" height="1.1" fill="#6db3e8"/><path d="M3.6 5.9 L8.3 0.2 L9.5 1.2 L4.9 6.9 L3.3 7.4 Z" fill="#0c4f8c"/><path d="M4.3 4.4 L5.9 5.7" stroke="#cfe6f8" stroke-width=".7"/></svg><svg class="ic" style="margin-right:3.8px" width="11.2" height="10" viewBox="0 0 11.2 10"><circle cx="4.1" cy="4.1" r="3.2" fill="#fff" stroke="#1573b8" stroke-width="1.35"/><path d="M6.7 6.4 L10 9" stroke="#1573b8" stroke-width="1.9" stroke-linecap="round"/></svg><svg class="ic" style="margin-right:4.2px" width="10.8" height="10" viewBox="0 0 10.8 10"><ellipse cx="5.4" cy="3.3" rx="2.7" ry="3.2" fill="#1a82d0"/><path d="M0.2 10 C0.6 8 2.6 7.6 3.9 6.6 H6.9 C8.2 7.6 10.2 8 10.6 10 Z" fill="#1a82d0"/></svg><svg class="ic" style="margin-right:3.5px" width="10" height="10.4" viewBox="0 0 10 10.4"><rect x="0" y="0.9" width="10" height="1.3" fill="#c2c2c2"/><rect x="3.2" y="0" width="3.6" height="1.2" fill="#c2c2c2"/><path d="M0.9 2.6 H9.1 V10.4 H0.9 Z" fill="#c2c2c2"/><rect x="2.9" y="3.2" width="1" height="6.4" fill="#e9e9e9"/><rect x="4.6" y="3.2" width="1" height="6.4" fill="#e9e9e9"/><rect x="6.3" y="3.2" width="1" height="6.4" fill="#e9e9e9"/></svg><svg class="ic" style="margin-right:0" width="11" height="10" viewBox="0 0 11 10"><rect x="0.2" y="7.3" width="2.4" height="2.5" fill="#0f62a6"/><rect x="4.3" y="7.3" width="2.4" height="2.5" fill="#0f62a6"/><rect x="8.4" y="7.3" width="2.4" height="2.5" fill="#0f62a6"/></svg></td><td class="c"><svg width="10.5" height="10.5" viewBox="0 0 10.5 10.5"><path d="M0 5.9 L2.1 4.2 L3.9 6.4 L8.6 0 L10.5 1.4 L4.2 10.5 Z" fill="#8fca93"/></svg></td><td class="nr">3.1</td><td class="name" style="padding-left:28px">Modul A</td><td class="r d thick">03.05.2016</td><td class="r d">12.12.2018</td><td class="ms">Abnahme</td><td class="r td">0 / 2</td><td class="r">100,00</td><td class="r ib">100,00</td><td class="bem">Quellcode 1</td><td></td><td></td></tr>
<tr class="alt sel"><td class="act"><svg class="ic" style="margin-right:4.8px" width="9.5" height="11" viewBox="0 0 9.5 11"><rect x="0" y="1.2" width="9" height="9.8" fill="#0f62a6"/><rect x="0.7" y="1.2" width="8.3" height="9.1" fill="#1f8ad8"/><rect x="1.6" y="6.6" width="6.4" height="1.2" fill="#8cc4ee"/><rect x="1.6" y="8.4" width="6.4" height="1.1" fill="#6db3e8"/><path d="M3.6 5.9 L8.3 0.2 L9.5 1.2 L4.9 6.9 L3.3 7.4 Z" fill="#0c4f8c"/><path d="M4.3 4.4 L5.9 5.7" stroke="#cfe6f8" stroke-width=".7"/></svg><svg class="ic" style="margin-right:3.8px" width="11.2" height="10" viewBox="0 0 11.2 10"><circle cx="4.1" cy="4.1" r="3.2" fill="#fff" stroke="#1573b8" stroke-width="1.35"/><path d="M6.7 6.4 L10 9" stroke="#1573b8" stroke-width="1.9" stroke-linecap="round"/></svg><svg class="ic" style="margin-right:4.2px" width="10.8" height="10" viewBox="0 0 10.8 10"><ellipse cx="5.4" cy="3.3" rx="2.7" ry="3.2" fill="#1a82d0"/><path d="M0.2 10 C0.6 8 2.6 7.6 3.9 6.6 H6.9 C8.2 7.6 10.2 8 10.6 10 Z" fill="#1a82d0"/></svg><svg class="ic" style="margin-right:3.5px" width="10" height="10.4" viewBox="0 0 10 10.4"><rect x="0" y="0.9" width="10" height="1.3" fill="#c2c2c2"/><rect x="3.2" y="0" width="3.6" height="1.2" fill="#c2c2c2"/><path d="M0.9 2.6 H9.1 V10.4 H0.9 Z" fill="#c2c2c2"/><rect x="2.9" y="3.2" width="1" height="6.4" fill="#e9e9e9"/><rect x="4.6" y="3.2" width="1" height="6.4" fill="#e9e9e9"/><rect x="6.3" y="3.2" width="1" height="6.4" fill="#e9e9e9"/></svg><svg class="ic" style="margin-right:0" width="11" height="10" viewBox="0 0 11 10"><rect x="0.2" y="7.3" width="2.4" height="2.5" fill="#0f62a6"/><rect x="4.3" y="7.3" width="2.4" height="2.5" fill="#0f62a6"/><rect x="8.4" y="7.3" width="2.4" height="2.5" fill="#0f62a6"/></svg></td><td class="c"><svg width="10.5" height="10.5" viewBox="0 0 10.5 10.5"><path d="M0 5.9 L2.1 4.2 L3.9 6.4 L8.6 0 L10.5 1.4 L4.2 10.5 Z" fill="#8fca93"/></svg></td><td class="nr">3.2</td><td class="name" style="padding-left:28px">Modul B</td><td class="r d thick">19.09.2018</td><td class="r d">29.12.2018</td><td class="ms">Abnahme</td><td class="r td">0 / 0</td><td class="r">100,00</td><td class="r">100,00</td><td class="bem">Teil 1 - 3</td><td></td><td></td></tr>
<tr class=""><td class="act"><svg class="ic" style="margin-right:4.8px" width="9.5" height="11" viewBox="0 0 9.5 11"><rect x="0" y="1.2" width="9" height="9.8" fill="#0f62a6"/><rect x="0.7" y="1.2" width="8.3" height="9.1" fill="#1f8ad8"/><rect x="1.6" y="6.6" width="6.4" height="1.2" fill="#8cc4ee"/><rect x="1.6" y="8.4" width="6.4" height="1.1" fill="#6db3e8"/><path d="M3.6 5.9 L8.3 0.2 L9.5 1.2 L4.9 6.9 L3.3 7.4 Z" fill="#0c4f8c"/><path d="M4.3 4.4 L5.9 5.7" stroke="#cfe6f8" stroke-width=".7"/></svg><svg class="ic" style="margin-right:3.8px" width="11.2" height="10" viewBox="0 0 11.2 10"><circle cx="4.1" cy="4.1" r="3.2" fill="#fff" stroke="#1573b8" stroke-width="1.35"/><path d="M6.7 6.4 L10 9" stroke="#1573b8" stroke-width="1.9" stroke-linecap="round"/></svg><svg class="ic" style="margin-right:4.2px" width="10.8" height="10" viewBox="0 0 10.8 10"><ellipse cx="5.4" cy="3.3" rx="2.7" ry="3.2" fill="#1a82d0"/><path d="M0.2 10 C0.6 8 2.6 7.6 3.9 6.6 H6.9 C8.2 7.6 10.2 8 10.6 10 Z" fill="#1a82d0"/></svg><svg class="ic" style="margin-right:3.5px" width="10" height="10.4" viewBox="0 0 10 10.4"><rect x="0" y="0.9" width="10" height="1.3" fill="#c2c2c2"/><rect x="3.2" y="0" width="3.6" height="1.2" fill="#c2c2c2"/><path d="M0.9 2.6 H9.1 V10.4 H0.9 Z" fill="#c2c2c2"/><rect x="2.9" y="3.2" width="1" height="6.4" fill="#e9e9e9"/><rect x="4.6" y="3.2" width="1" height="6.4" fill="#e9e9e9"/><rect x="6.3" y="3.2" width="1" height="6.4" fill="#e9e9e9"/></svg><svg class="ic" style="margin-right:0" width="11" height="10" viewBox="0 0 11 10"><rect x="0.2" y="7.3" width="2.4" height="2.5" fill="#0f62a6"/><rect x="4.3" y="7.3" width="2.4" height="2.5" fill="#0f62a6"/><rect x="8.4" y="7.3" width="2.4" height="2.5" fill="#0f62a6"/></svg></td><td class="c"><svg width="10.5" height="10.5" viewBox="0 0 10.5 10.5"><path d="M0 5.9 L2.1 4.2 L3.9 6.4 L8.6 0 L10.5 1.4 L4.2 10.5 Z" fill="#8fca93"/></svg></td><td class="nr">3.3</td><td class="name" style="padding-left:28px">Modul C</td><td class="r d thick">12.12.2018</td><td class="r d">05.01.2019</td><td class="ms">Abnahme</td><td class="r td">0 / 1</td><td class="r">100,00</td><td class="r">100,00</td><td class="bem"></td><td></td><td></td></tr>
<tr class="alt"><td class="act"><svg class="ic" style="margin-right:4.8px" width="9.5" height="11" viewBox="0 0 9.5 11"><rect x="0" y="1.2" width="9" height="9.8" fill="#0f62a6"/><rect x="0.7" y="1.2" width="8.3" height="9.1" fill="#1f8ad8"/><rect x="1.6" y="6.6" width="6.4" height="1.2" fill="#8cc4ee"/><rect x="1.6" y="8.4" width="6.4" height="1.1" fill="#6db3e8"/><path d="M3.6 5.9 L8.3 0.2 L9.5 1.2 L4.9 6.9 L3.3 7.4 Z" fill="#0c4f8c"/><path d="M4.3 4.4 L5.9 5.7" stroke="#cfe6f8" stroke-width=".7"/></svg><svg class="ic" style="margin-right:3.8px" width="11.2" height="10" viewBox="0 0 11.2 10"><circle cx="4.1" cy="4.1" r="3.2" fill="#fff" stroke="#1573b8" stroke-width="1.35"/><path d="M6.7 6.4 L10 9" stroke="#1573b8" stroke-width="1.9" stroke-linecap="round"/></svg><svg class="ic" style="margin-right:4.2px" width="10.8" height="10" viewBox="0 0 10.8 10"><ellipse cx="5.4" cy="3.3" rx="2.7" ry="3.2" fill="#1a82d0"/><path d="M0.2 10 C0.6 8 2.6 7.6 3.9 6.6 H6.9 C8.2 7.6 10.2 8 10.6 10 Z" fill="#1a82d0"/></svg><svg class="ic" style="margin-right:3.5px" width="10" height="10.4" viewBox="0 0 10 10.4"><rect x="0" y="0.9" width="10" height="1.3" fill="#c2c2c2"/><rect x="3.2" y="0" width="3.6" height="1.2" fill="#c2c2c2"/><path d="M0.9 2.6 H9.1 V10.4 H0.9 Z" fill="#c2c2c2"/><rect x="2.9" y="3.2" width="1" height="6.4" fill="#e9e9e9"/><rect x="4.6" y="3.2" width="1" height="6.4" fill="#e9e9e9"/><rect x="6.3" y="3.2" width="1" height="6.4" fill="#e9e9e9"/></svg><svg class="ic" style="margin-right:0" width="11" height="10" viewBox="0 0 11 10"><rect x="0.2" y="7.3" width="2.4" height="2.5" fill="#0f62a6"/><rect x="4.3" y="7.3" width="2.4" height="2.5" fill="#0f62a6"/><rect x="8.4" y="7.3" width="2.4" height="2.5" fill="#0f62a6"/></svg></td><td class="c"><svg width="10.5" height="10.5" viewBox="0 0 10.5 10.5"><path d="M0 5.9 L2.1 4.2 L3.9 6.4 L8.6 0 L10.5 1.4 L4.2 10.5 Z" fill="#8fca93"/></svg></td><td class="nr">3.4</td><td class="name" style="padding-left:28px">Modul D</td><td class="r d thick">13.10.2018</td><td class="r d">10.01.2019</td><td class="ms">Abnahme</td><td class="r td">0 / 0</td><td class="r">100,00</td><td class="r">100,00</td><td class="bem"></td><td></td><td></td></tr>
<tr class="b"><td class="act"><svg class="ic" style="margin-right:4.8px" width="9.5" height="11" viewBox="0 0 9.5 11"><rect x="0" y="1.2" width="9" height="9.8" fill="#0f62a6"/><rect x="0.7" y="1.2" width="8.3" height="9.1" fill="#1f8ad8"/><rect x="1.6" y="6.6" width="6.4" height="1.2" fill="#8cc4ee"/><rect x="1.6" y="8.4" width="6.4" height="1.1" fill="#6db3e8"/><path d="M3.6 5.9 L8.3 0.2 L9.5 1.2 L4.9 6.9 L3.3 7.4 Z" fill="#0c4f8c"/><path d="M4.3 4.4 L5.9 5.7" stroke="#cfe6f8" stroke-width=".7"/></svg><svg class="ic" style="margin-right:3.8px" width="11.2" height="10" viewBox="0 0 11.2 10"><circle cx="4.1" cy="4.1" r="3.2" fill="#fff" stroke="#1573b8" stroke-width="1.35"/><path d="M6.7 6.4 L10 9" stroke="#1573b8" stroke-width="1.9" stroke-linecap="round"/></svg><svg class="ic" style="margin-right:4.2px" width="10.8" height="10" viewBox="0 0 10.8 10"><ellipse cx="5.4" cy="3.3" rx="2.7" ry="3.2" fill="#c2c2c2"/><path d="M0.2 10 C0.6 8 2.6 7.6 3.9 6.6 H6.9 C8.2 7.6 10.2 8 10.6 10 Z" fill="#c2c2c2"/></svg><svg class="ic" style="margin-right:3.5px" width="10" height="10.4" viewBox="0 0 10 10.4"><rect x="0" y="0.9" width="10" height="1.3" fill="#1a82d0"/><rect x="3.2" y="0" width="3.6" height="1.2" fill="#1a82d0"/><path d="M0.9 2.6 H9.1 V10.4 H0.9 Z" fill="#1a82d0"/><rect x="2.9" y="3.2" width="1" height="6.4" fill="#8cc4ee"/><rect x="4.6" y="3.2" width="1" height="6.4" fill="#8cc4ee"/><rect x="6.3" y="3.2" width="1" height="6.4" fill="#8cc4ee"/></svg><svg class="ic" style="margin-right:0" width="11" height="10" viewBox="0 0 11 10"><rect x="0.2" y="7.3" width="2.4" height="2.5" fill="#0f62a6"/><rect x="4.3" y="7.3" width="2.4" height="2.5" fill="#0f62a6"/><rect x="8.4" y="7.3" width="2.4" height="2.5" fill="#0f62a6"/></svg></td><td class="c"></td><td class="nr">4</td><td class="name" style="padding-left:18px"><span class="tg"><i></i></span>Qualitätssicherung</td><td class="r d thick">26.12.2018</td><td class="r d">06.03.2019</td><td class="ms"></td><td class="r td">0 / 1</td><td class="r">96,67</td><td class="r ib">50,00</td><td class="bem"></td><td></td><td></td></tr>
<tr class="alt"><td class="act"><svg class="ic" style="margin-right:4.8px" width="9.5" height="11" viewBox="0 0 9.5 11"><rect x="0" y="1.2" width="9" height="9.8" fill="#0f62a6"/><rect x="0.7" y="1.2" width="8.3" height="9.1" fill="#1f8ad8"/><rect x="1.6" y="6.6" width="6.4" height="1.2" fill="#8cc4ee"/><rect x="1.6" y="8.4" width="6.4" height="1.1" fill="#6db3e8"/><path d="M3.6 5.9 L8.3 0.2 L9.5 1.2 L4.9 6.9 L3.3 7.4 Z" fill="#0c4f8c"/><path d="M4.3 4.4 L5.9 5.7" stroke="#cfe6f8" stroke-width=".7"/></svg><svg class="ic" style="margin-right:3.8px" width="11.2" height="10" viewBox="0 0 11.2 10"><circle cx="4.1" cy="4.1" r="3.2" fill="#fff" stroke="#1573b8" stroke-width="1.35"/><path d="M6.7 6.4 L10 9" stroke="#1573b8" stroke-width="1.9" stroke-linecap="round"/></svg><svg class="ic" style="margin-right:4.2px" width="10.8" height="10" viewBox="0 0 10.8 10"><ellipse cx="5.4" cy="3.3" rx="2.7" ry="3.2" fill="#c2c2c2"/><path d="M0.2 10 C0.6 8 2.6 7.6 3.9 6.6 H6.9 C8.2 7.6 10.2 8 10.6 10 Z" fill="#c2c2c2"/></svg><svg class="ic" style="margin-right:3.5px" width="10" height="10.4" viewBox="0 0 10 10.4"><rect x="0" y="0.9" width="10" height="1.3" fill="#1a82d0"/><rect x="3.2" y="0" width="3.6" height="1.2" fill="#1a82d0"/><path d="M0.9 2.6 H9.1 V10.4 H0.9 Z" fill="#1a82d0"/><rect x="2.9" y="3.2" width="1" height="6.4" fill="#8cc4ee"/><rect x="4.6" y="3.2" width="1" height="6.4" fill="#8cc4ee"/><rect x="6.3" y="3.2" width="1" height="6.4" fill="#8cc4ee"/></svg><svg class="ic" style="margin-right:0" width="11" height="10" viewBox="0 0 11 10"><rect x="0.2" y="7.3" width="2.4" height="2.5" fill="#0f62a6"/><rect x="4.3" y="7.3" width="2.4" height="2.5" fill="#0f62a6"/><rect x="8.4" y="7.3" width="2.4" height="2.5" fill="#0f62a6"/></svg></td><td class="c"></td><td class="nr">4.1</td><td class="name" style="padding-left:28px">QS Modul A</td><td class="r d thick">16.01.2019</td><td class="r d">22.02.2019</td><td class="ms">Abnahme</td><td class="r td">0 / 0</td><td class="r">0,00</td><td class="r ig">0,00</td><td class="bem"></td><td></td><td></td></tr>
<tr class=""><td class="act"><svg class="ic" style="margin-right:4.8px" width="9.5" height="11" viewBox="0 0 9.5 11"><rect x="0" y="1.2" width="9" height="9.8" fill="#0f62a6"/><rect x="0.7" y="1.2" width="8.3" height="9.1" fill="#1f8ad8"/><rect x="1.6" y="6.6" width="6.4" height="1.2" fill="#8cc4ee"/><rect x="1.6" y="8.4" width="6.4" height="1.1" fill="#6db3e8"/><path d="M3.6 5.9 L8.3 0.2 L9.5 1.2 L4.9 6.9 L3.3 7.4 Z" fill="#0c4f8c"/><path d="M4.3 4.4 L5.9 5.7" stroke="#cfe6f8" stroke-width=".7"/></svg><svg class="ic" style="margin-right:3.8px" width="11.2" height="10" viewBox="0 0 11.2 10"><circle cx="4.1" cy="4.1" r="3.2" fill="#fff" stroke="#1573b8" stroke-width="1.35"/><path d="M6.7 6.4 L10 9" stroke="#1573b8" stroke-width="1.9" stroke-linecap="round"/></svg><svg class="ic" style="margin-right:4.2px" width="10.8" height="10" viewBox="0 0 10.8 10"><ellipse cx="5.4" cy="3.3" rx="2.7" ry="3.2" fill="#1a82d0"/><path d="M0.2 10 C0.6 8 2.6 7.6 3.9 6.6 H6.9 C8.2 7.6 10.2 8 10.6 10 Z" fill="#1a82d0"/></svg><svg class="ic" style="margin-right:3.5px" width="10" height="10.4" viewBox="0 0 10 10.4"><rect x="0" y="0.9" width="10" height="1.3" fill="#1a82d0"/><rect x="3.2" y="0" width="3.6" height="1.2" fill="#1a82d0"/><path d="M0.9 2.6 H9.1 V10.4 H0.9 Z" fill="#1a82d0"/><rect x="2.9" y="3.2" width="1" height="6.4" fill="#8cc4ee"/><rect x="4.6" y="3.2" width="1" height="6.4" fill="#8cc4ee"/><rect x="6.3" y="3.2" width="1" height="6.4" fill="#8cc4ee"/></svg><svg class="ic" style="margin-right:0" width="11" height="10" viewBox="0 0 11 10"><rect x="0.2" y="7.3" width="2.4" height="2.5" fill="#0f62a6"/><rect x="4.3" y="7.3" width="2.4" height="2.5" fill="#0f62a6"/><rect x="8.4" y="7.3" width="2.4" height="2.5" fill="#0f62a6"/></svg></td><td class="c"></td><td class="nr">4.2</td><td class="name" style="padding-left:28px">QS Modul B</td><td class="r d thick">07.02.2019</td><td class="r d">06.03.2019</td><td class="ms"></td><td class="r td">0 / 0</td><td class="r">95,00</td><td class="r ig">0,00</td><td class="bem"></td><td></td><td></td></tr>
<tr class="alt"><td class="act"><svg class="ic" style="margin-right:4.8px" width="9.5" height="11" viewBox="0 0 9.5 11"><rect x="0" y="1.2" width="9" height="9.8" fill="#0f62a6"/><rect x="0.7" y="1.2" width="8.3" height="9.1" fill="#1f8ad8"/><rect x="1.6" y="6.6" width="6.4" height="1.2" fill="#8cc4ee"/><rect x="1.6" y="8.4" width="6.4" height="1.1" fill="#6db3e8"/><path d="M3.6 5.9 L8.3 0.2 L9.5 1.2 L4.9 6.9 L3.3 7.4 Z" fill="#0c4f8c"/><path d="M4.3 4.4 L5.9 5.7" stroke="#cfe6f8" stroke-width=".7"/></svg><svg class="ic" style="margin-right:3.8px" width="11.2" height="10" viewBox="0 0 11.2 10"><circle cx="4.1" cy="4.1" r="3.2" fill="#fff" stroke="#1573b8" stroke-width="1.35"/><path d="M6.7 6.4 L10 9" stroke="#1573b8" stroke-width="1.9" stroke-linecap="round"/></svg><svg class="ic" style="margin-right:4.2px" width="10.8" height="10" viewBox="0 0 10.8 10"><ellipse cx="5.4" cy="3.3" rx="2.7" ry="3.2" fill="#c2c2c2"/><path d="M0.2 10 C0.6 8 2.6 7.6 3.9 6.6 H6.9 C8.2 7.6 10.2 8 10.6 10 Z" fill="#c2c2c2"/></svg><svg class="ic" style="margin-right:3.5px" width="10" height="10.4" viewBox="0 0 10 10.4"><rect x="0" y="0.9" width="10" height="1.3" fill="#1a82d0"/><rect x="3.2" y="0" width="3.6" height="1.2" fill="#1a82d0"/><path d="M0.9 2.6 H9.1 V10.4 H0.9 Z" fill="#1a82d0"/><rect x="2.9" y="3.2" width="1" height="6.4" fill="#8cc4ee"/><rect x="4.6" y="3.2" width="1" height="6.4" fill="#8cc4ee"/><rect x="6.3" y="3.2" width="1" height="6.4" fill="#8cc4ee"/></svg><svg class="ic" style="margin-right:0" width="11" height="10" viewBox="0 0 11 10"><rect x="0.2" y="7.3" width="2.4" height="2.5" fill="#0f62a6"/><rect x="4.3" y="7.3" width="2.4" height="2.5" fill="#0f62a6"/><rect x="8.4" y="7.3" width="2.4" height="2.5" fill="#0f62a6"/></svg></td><td class="c"></td><td class="nr">4.3</td><td class="name" style="padding-left:28px">QS Modul C</td><td class="r d thick">26.12.2018</td><td class="r d">09.01.2019</td><td class="ms"></td><td class="r td">0 / 1</td><td class="r">100,00</td><td class="r ig">0,00</td><td class="bem"></td><td></td><td></td></tr>
<tr class="l"><td class="act"><svg class="ic" style="margin-right:4.8px" width="9.5" height="11" viewBox="0 0 9.5 11"><rect x="0" y="1.2" width="9" height="9.8" fill="#0f62a6"/><rect x="0.7" y="1.2" width="8.3" height="9.1" fill="#1f8ad8"/><rect x="1.6" y="6.6" width="6.4" height="1.2" fill="#8cc4ee"/><rect x="1.6" y="8.4" width="6.4" height="1.1" fill="#6db3e8"/><path d="M3.6 5.9 L8.3 0.2 L9.5 1.2 L4.9 6.9 L3.3 7.4 Z" fill="#0c4f8c"/><path d="M4.3 4.4 L5.9 5.7" stroke="#cfe6f8" stroke-width=".7"/></svg><svg class="ic" style="margin-right:3.8px" width="11.2" height="10" viewBox="0 0 11.2 10"><circle cx="4.1" cy="4.1" r="3.2" fill="#fff" stroke="#1573b8" stroke-width="1.35"/><path d="M6.7 6.4 L10 9" stroke="#1573b8" stroke-width="1.9" stroke-linecap="round"/></svg><svg class="ic" style="margin-right:4.2px" width="10.8" height="10" viewBox="0 0 10.8 10"><ellipse cx="5.4" cy="3.3" rx="2.7" ry="3.2" fill="#c2c2c2"/><path d="M0.2 10 C0.6 8 2.6 7.6 3.9 6.6 H6.9 C8.2 7.6 10.2 8 10.6 10 Z" fill="#c2c2c2"/></svg><svg class="ic" style="margin-right:3.5px" width="10" height="10.4" viewBox="0 0 10 10.4"><rect x="0" y="0.9" width="10" height="1.3" fill="#c2c2c2"/><rect x="3.2" y="0" width="3.6" height="1.2" fill="#c2c2c2"/><path d="M0.9 2.6 H9.1 V10.4 H0.9 Z" fill="#c2c2c2"/><rect x="2.9" y="3.2" width="1" height="6.4" fill="#e9e9e9"/><rect x="4.6" y="3.2" width="1" height="6.4" fill="#e9e9e9"/><rect x="6.3" y="3.2" width="1" height="6.4" fill="#e9e9e9"/></svg><svg class="ic" style="margin-right:0" width="11" height="10" viewBox="0 0 11 10"><rect x="0.2" y="7.3" width="2.4" height="2.5" fill="#0f62a6"/><rect x="4.3" y="7.3" width="2.4" height="2.5" fill="#0f62a6"/><rect x="8.4" y="7.3" width="2.4" height="2.5" fill="#0f62a6"/></svg></td><td class="c"></td><td class="nr">4.4</td><td class="name" style="padding-left:28px">Endabnahme</td><td class="r d thick">06.03.2019</td><td class="r d">06.03.2019</td><td class="ms">QualityGate</td><td class="r td">0 / 0</td><td class="r"></td><td class="r ig"></td><td class="bem"></td><td></td><td></td></tr>
<tr class="alt b"><td class="act"><svg class="ic" style="margin-right:4.8px" width="9.5" height="11" viewBox="0 0 9.5 11"><rect x="0" y="1.2" width="9" height="9.8" fill="#0f62a6"/><rect x="0.7" y="1.2" width="8.3" height="9.1" fill="#1f8ad8"/><rect x="1.6" y="6.6" width="6.4" height="1.2" fill="#8cc4ee"/><rect x="1.6" y="8.4" width="6.4" height="1.1" fill="#6db3e8"/><path d="M3.6 5.9 L8.3 0.2 L9.5 1.2 L4.9 6.9 L3.3 7.4 Z" fill="#0c4f8c"/><path d="M4.3 4.4 L5.9 5.7" stroke="#cfe6f8" stroke-width=".7"/></svg><svg class="ic" style="margin-right:3.8px" width="11.2" height="10" viewBox="0 0 11.2 10"><circle cx="4.1" cy="4.1" r="3.2" fill="#fff" stroke="#1573b8" stroke-width="1.35"/><path d="M6.7 6.4 L10 9" stroke="#1573b8" stroke-width="1.9" stroke-linecap="round"/></svg><svg class="ic" style="margin-right:4.2px" width="10.8" height="10" viewBox="0 0 10.8 10"><ellipse cx="5.4" cy="3.3" rx="2.7" ry="3.2" fill="#c2c2c2"/><path d="M0.2 10 C0.6 8 2.6 7.6 3.9 6.6 H6.9 C8.2 7.6 10.2 8 10.6 10 Z" fill="#c2c2c2"/></svg><svg class="ic" style="margin-right:3.5px" width="10" height="10.4" viewBox="0 0 10 10.4"><rect x="0" y="0.9" width="10" height="1.3" fill="#1a82d0"/><rect x="3.2" y="0" width="3.6" height="1.2" fill="#1a82d0"/><path d="M0.9 2.6 H9.1 V10.4 H0.9 Z" fill="#1a82d0"/><rect x="2.9" y="3.2" width="1" height="6.4" fill="#8cc4ee"/><rect x="4.6" y="3.2" width="1" height="6.4" fill="#8cc4ee"/><rect x="6.3" y="3.2" width="1" height="6.4" fill="#8cc4ee"/></svg><svg class="ic" style="margin-right:0" width="11" height="10" viewBox="0 0 11 10"><rect x="0.2" y="7.3" width="2.4" height="2.5" fill="#0f62a6"/><rect x="4.3" y="7.3" width="2.4" height="2.5" fill="#0f62a6"/><rect x="8.4" y="7.3" width="2.4" height="2.5" fill="#0f62a6"/></svg></td><td class="c"></td><td class="nr">5</td><td class="name" style="padding-left:18px"><span class="tg"><i></i><b></b></span>Inbetriebnahme</td><td class="r d thick">16.03.2019</td><td class="r d">25.04.2019</td><td class="ms"></td><td class="r td">0 / 0</td><td class="r">0,00</td><td class="r">0,00</td><td class="bem"></td><td></td><td></td></tr>
<tr class=""><td class="act"><svg class="ic" style="margin-right:4.8px" width="9.5" height="11" viewBox="0 0 9.5 11"><rect x="0" y="1.2" width="9" height="9.8" fill="#0f62a6"/><rect x="0.7" y="1.2" width="8.3" height="9.1" fill="#1f8ad8"/><rect x="1.6" y="6.6" width="6.4" height="1.2" fill="#8cc4ee"/><rect x="1.6" y="8.4" width="6.4" height="1.1" fill="#6db3e8"/><path d="M3.6 5.9 L8.3 0.2 L9.5 1.2 L4.9 6.9 L3.3 7.4 Z" fill="#0c4f8c"/><path d="M4.3 4.4 L5.9 5.7" stroke="#cfe6f8" stroke-width=".7"/></svg><svg class="ic" style="margin-right:3.8px" width="11.2" height="10" viewBox="0 0 11.2 10"><circle cx="4.1" cy="4.1" r="3.2" fill="#fff" stroke="#1573b8" stroke-width="1.35"/><path d="M6.7 6.4 L10 9" stroke="#1573b8" stroke-width="1.9" stroke-linecap="round"/></svg><svg class="ic" style="margin-right:4.2px" width="10.8" height="10" viewBox="0 0 10.8 10"><ellipse cx="5.4" cy="3.3" rx="2.7" ry="3.2" fill="#1a82d0"/><path d="M0.2 10 C0.6 8 2.6 7.6 3.9 6.6 H6.9 C8.2 7.6 10.2 8 10.6 10 Z" fill="#1a82d0"/></svg><svg class="ic" style="margin-right:3.5px" width="10" height="10.4" viewBox="0 0 10 10.4"><rect x="0" y="0.9" width="10" height="1.3" fill="#c2c2c2"/><rect x="3.2" y="0" width="3.6" height="1.2" fill="#c2c2c2"/><path d="M0.9 2.6 H9.1 V10.4 H0.9 Z" fill="#c2c2c2"/><rect x="2.9" y="3.2" width="1" height="6.4" fill="#e9e9e9"/><rect x="4.6" y="3.2" width="1" height="6.4" fill="#e9e9e9"/><rect x="6.3" y="3.2" width="1" height="6.4" fill="#e9e9e9"/></svg><svg class="ic" style="margin-right:0" width="11" height="10" viewBox="0 0 11 10"><rect x="0.2" y="7.3" width="2.4" height="2.5" fill="#0f62a6"/><rect x="4.3" y="7.3" width="2.4" height="2.5" fill="#0f62a6"/><rect x="8.4" y="7.3" width="2.4" height="2.5" fill="#0f62a6"/></svg></td><td class="c"></td><td class="nr">6</td><td class="name" style="padding-left:18px">Training</td><td class="r d thick">27.04.2019</td><td class="r d">31.05.2019</td><td class="ms">Abnahme</td><td class="r td">0 / 0</td><td class="r">0,00</td><td class="r ib">80,00</td><td class="bem"></td><td></td><td></td></tr>
<tr class="alt"><td class="act"><svg class="ic" style="margin-right:4.8px" width="9.5" height="11" viewBox="0 0 9.5 11"><rect x="0" y="1.2" width="9" height="9.8" fill="#0f62a6"/><rect x="0.7" y="1.2" width="8.3" height="9.1" fill="#1f8ad8"/><rect x="1.6" y="6.6" width="6.4" height="1.2" fill="#8cc4ee"/><rect x="1.6" y="8.4" width="6.4" height="1.1" fill="#6db3e8"/><path d="M3.6 5.9 L8.3 0.2 L9.5 1.2 L4.9 6.9 L3.3 7.4 Z" fill="#0c4f8c"/><path d="M4.3 4.4 L5.9 5.7" stroke="#cfe6f8" stroke-width=".7"/></svg><svg class="ic" style="margin-right:3.8px" width="11.2" height="10" viewBox="0 0 11.2 10"><circle cx="4.1" cy="4.1" r="3.2" fill="#fff" stroke="#1573b8" stroke-width="1.35"/><path d="M6.7 6.4 L10 9" stroke="#1573b8" stroke-width="1.9" stroke-linecap="round"/></svg><svg class="ic" style="margin-right:4.2px" width="10.8" height="10" viewBox="0 0 10.8 10"><ellipse cx="5.4" cy="3.3" rx="2.7" ry="3.2" fill="#1a82d0"/><path d="M0.2 10 C0.6 8 2.6 7.6 3.9 6.6 H6.9 C8.2 7.6 10.2 8 10.6 10 Z" fill="#1a82d0"/></svg><svg class="ic" style="margin-right:3.5px" width="10" height="10.4" viewBox="0 0 10 10.4"><rect x="0" y="0.9" width="10" height="1.3" fill="#c2c2c2"/><rect x="3.2" y="0" width="3.6" height="1.2" fill="#c2c2c2"/><path d="M0.9 2.6 H9.1 V10.4 H0.9 Z" fill="#c2c2c2"/><rect x="2.9" y="3.2" width="1" height="6.4" fill="#e9e9e9"/><rect x="4.6" y="3.2" width="1" height="6.4" fill="#e9e9e9"/><rect x="6.3" y="3.2" width="1" height="6.4" fill="#e9e9e9"/></svg><svg class="ic" style="margin-right:0" width="11" height="10" viewBox="0 0 11 10"><rect x="0.2" y="7.3" width="2.4" height="2.5" fill="#0f62a6"/><rect x="4.3" y="7.3" width="2.4" height="2.5" fill="#0f62a6"/><rect x="8.4" y="7.3" width="2.4" height="2.5" fill="#0f62a6"/></svg></td><td class="c"></td><td class="nr">7</td><td class="name" style="padding-left:18px">Nachbereitung</td><td class="r d thick">05.06.2019</td><td class="r d">18.06.2019</td><td class="ms"></td><td class="r td">0 / 0</td><td class="r">0,00</td><td class="r">40,00</td><td class="bem"></td><td></td><td></td></tr>
<tr class="new"><td class="act"><svg class="ic" style="margin-right:4.8px" width="9.5" height="11" viewBox="0 0 9.5 11"><rect x="0" y="1.2" width="9" height="9.8" fill="#0f62a6"/><rect x="0.7" y="1.2" width="8.3" height="9.1" fill="#1f8ad8"/><rect x="1.6" y="6.6" width="6.4" height="1.2" fill="#8cc4ee"/><rect x="1.6" y="8.4" width="6.4" height="1.1" fill="#6db3e8"/><path d="M3.6 5.9 L8.3 0.2 L9.5 1.2 L4.9 6.9 L3.3 7.4 Z" fill="#0c4f8c"/><path d="M4.3 4.4 L5.9 5.7" stroke="#cfe6f8" stroke-width=".7"/></svg><svg class="ic" style="margin-right:3.8px" width="11.2" height="10" viewBox="0 0 11.2 10"><circle cx="4.1" cy="4.1" r="3.2" fill="#fff" stroke="#c4c4c4" stroke-width="1.35"/><path d="M6.7 6.4 L10 9" stroke="#c4c4c4" stroke-width="1.9" stroke-linecap="round"/></svg><svg class="ic" style="margin-right:4.2px" width="10.8" height="10" viewBox="0 0 10.8 10"><ellipse cx="5.4" cy="3.3" rx="2.7" ry="3.2" fill="#c2c2c2"/><path d="M0.2 10 C0.6 8 2.6 7.6 3.9 6.6 H6.9 C8.2 7.6 10.2 8 10.6 10 Z" fill="#c2c2c2"/></svg><svg class="ic" style="margin-right:3.5px" width="10" height="10.4" viewBox="0 0 10 10.4"><rect x="0" y="0.9" width="10" height="1.3" fill="#c2c2c2"/><rect x="3.2" y="0" width="3.6" height="1.2" fill="#c2c2c2"/><path d="M0.9 2.6 H9.1 V10.4 H0.9 Z" fill="#c2c2c2"/><rect x="2.9" y="3.2" width="1" height="6.4" fill="#e9e9e9"/><rect x="4.6" y="3.2" width="1" height="6.4" fill="#e9e9e9"/><rect x="6.3" y="3.2" width="1" height="6.4" fill="#e9e9e9"/></svg><svg class="ic" style="margin-right:0" width="11" height="10" viewBox="0 0 11 10"><rect x="0.2" y="7.3" width="2.4" height="2.5" fill="#0f62a6"/><rect x="4.3" y="7.3" width="2.4" height="2.5" fill="#0f62a6"/><rect x="8.4" y="7.3" width="2.4" height="2.5" fill="#0f62a6"/></svg></td><td></td><td></td><td class="name" style="padding-left:18px"><i>Doppelklick für neue Aktivität</i></td><td class="thick"></td><td></td><td></td><td></td><td></td><td></td><td></td><td></td><td></td></tr>
<tr class="sum"><td></td><td></td><td></td><td class="r sm">Summe</td><td class="thick"></td><td></td><td></td><td></td><td></td><td></td><td></td><td></td><td></td></tr>
</tbody></table>
<svg width="10" height="15" viewBox="0 0 10 15" style="position:absolute;left:293px;top:391px;z-index:6"><path d="M0.5 0.5 V11.5 L3 9.2 L5 13.8 L6.8 13 L4.8 8.6 H8.3 Z" fill="#fff" stroke="#222" stroke-width=".8"/></svg>
<div id="foot">Der Plan enthält 28 aktive Konfliktmeldungen. Es gibt weitere deaktivierte Meldungen. Zum Bearbeiten bitte hier klicken. <svg width="7" height="7" viewBox="0 0 7 7" style="margin-left:8px"><path d="M0.5 6.5 L1.2 4.6 L5.2 0.6 L6.4 1.8 L2.4 5.8 Z" fill="#777"/></svg></div>
<div class="nt" style="top:37.3px;border:1px solid #7fb9dd"><div class="bar" style="background:#1b9ad6"></div><span style="position:absolute;left:8.5px;top:4px;color:#fff;font:bold 14px/16px 'Liberation Serif',serif">i</span>
<p>Die letzte Berechnung des Projektplanes erfolgte am<br>05.03.2019 09:25</p><svg width="8" height="6" viewBox="0 0 8 6" style="position:absolute;left:272px;top:9px"><path d="M0 3 H3" stroke="#6a6a6a" stroke-width="1"/><path d="M3 .6 V5.4 M3.2 1.6 H6.4 V4.4 H3.2 Z M7.2 .4 V5.6" stroke="#6a6a6a" stroke-width="1.1" fill="#6a6a6a"/></svg><svg width="6" height="6" viewBox="0 0 6 6" style="position:absolute;left:285px;top:9px"><path d="M.8 .8 L5.2 5.2 M5.2 .8 L.8 5.2" stroke="#666" stroke-width="1.5"/></svg></div>
<div class="nt" style="top:81px;border:1px solid #f0c36d"><div class="bar" style="background:#f2a71b"></div><svg width="10" height="10" viewBox="0 0 11 11" style="position:absolute;left:7px;top:6.5px"><rect x="0.5" y="1.5" width="9" height="9" fill="#fff6df"/><path d="M5 6.5 L9.6 0.6 L10.8 1.6 L6.2 7.4 L4.6 7.9 Z" fill="#f2a71b" stroke="#fff6df" stroke-width=".6"/></svg>
<p>Der Plan enthält 28 aktive Konfliktmeldungen. Es gibt weitere<br>deaktivierte Meldungen. Zum Bearbeiten bitte hier klicken.</p><svg width="6" height="8" viewBox="0 0 6 8" style="position:absolute;left:273.5px;top:7.5px"><path d="M3 5 V8" stroke="#6a6a6a" stroke-width="1"/><path d="M.6 5 H5.4 M1.6 4.8 V1.6 H4.4 V4.8 Z M.4 .8 H5.6" stroke="#6a6a6a" stroke-width="1.1" fill="#6a6a6a"/></svg><svg width="6" height="6" viewBox="0 0 6 6" style="position:absolute;left:285px;top:9px"><path d="M.8 .8 L5.2 5.2 M5.2 .8 L.8 5.2" stroke="#666" stroke-width="1.5"/></svg></div>
</body></html>
